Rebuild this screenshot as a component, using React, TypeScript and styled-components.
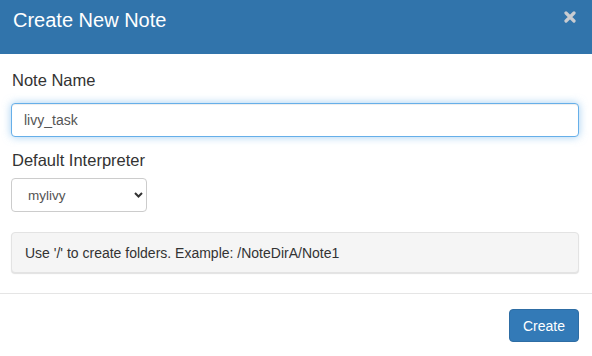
import React from "react";
import styled, { createGlobalStyle } from "styled-components";

const Global = createGlobalStyle`
  html, body { margin: 0; padding: 0; background: #fff; }
  body { font-family: "Liberation Sans", Arial, sans-serif; color: #333; }
  * { box-sizing: border-box; }
`;

const Modal = styled.div`
  width: 592px;
  height: 356px;
  display: flex;
  flex-direction: column;
  background: #fff;
`;

const Header = styled.div`
  height: 54px;
  background: #3174ab;
  display: flex;
  align-items: flex-start;
  justify-content: space-between;
  padding: 9px 16px 0 13px;
`;

const Title = styled.h4`
  margin: 0;
  font-size: 20px;
  line-height: 22px;
  font-weight: normal;
  color: #fff;
`;

const Close = styled.button`
  border: 0;
  background: transparent;
  padding: 0;
  margin-top: 2px;
  width: 12px;
  height: 12px;
  display: flex;
  cursor: pointer;
`;

const Body = styled.div`
  padding: 14px 13px 20px 11px;
  display: flex;
  flex-direction: column;
`;

const Label = styled.label<{ $gap: number }>`
  display: block;
  font-size: 16.5px;
  line-height: 24px;
  color: #333;
  padding-left: 1px;
  margin-bottom: ${(p) => p.$gap}px;
`;

const TextInput = styled.input`
  height: 34px;
  width: 100%;
  border: 1px solid #66afe9;
  border-radius: 4px;
  padding: 0 12px;
  font-family: "Liberation Sans", Arial, sans-serif;
  font-size: 14px;
  color: #555;
  outline: none;
  box-shadow: inset 0 1px 1px rgba(0, 0, 0, 0.075), 0 0 8px rgba(102, 175, 233, 0.6);
  margin-bottom: 11px;
`;

const SelectWrap = styled.div`
  position: relative;
  width: 136px;
  height: 34px;
  margin-bottom: 20px;
`;

const Select = styled.select`
  appearance: none;
  width: 100%;
  height: 100%;
  border: 1px solid #ccc;
  border-radius: 4px;
  padding: 0 0 0 16px;
  font-family: "Liberation Sans", Arial, sans-serif;
  font-size: 13.5px;
  color: #555;
  background: #fff;
  outline: none;
`;

const Chevron = styled.svg`
  position: absolute;
  right: 4px;
  top: 14px;
  pointer-events: none;
`;

const Well = styled.div`
  background: #f5f5f5;
  border: 1px solid #e3e3e3;
  border-radius: 4px;
  box-shadow: 0 1px 1px rgba(0, 0, 0, 0.12);
  padding: 10px 13px 9px;
  font-size: 14px;
  line-height: 20px;
  color: #333;
`;

const Footer = styled.div`
  border-top: 1px solid #e5e5e5;
  padding: 15px 13px 0 0;
  display: flex;
  justify-content: flex-end;
`;

const Button = styled.button`
  height: 33px;
  padding: 0 13px;
  background: #337ab7;
  border: 1px solid #2e6da4;
  border-radius: 4px;
  color: #fff;
  font-family: "Liberation Sans", Arial, sans-serif;
  font-size: 14px;
  cursor: pointer;
`;

export default function App() {
  return (
    <>
      <Global />
      <Modal>
        <Header>
          <Title>Create New Note</Title>
          <Close aria-label="Close">
            <svg width="12" height="12" viewBox="0 0 12 12">
              <path d="M2 2 L10 10 M10 2 L2 10" stroke="#c9ccd1" strokeWidth="3.2" strokeLinecap="round" />
            </svg>
          </Close>
        </Header>
        <Body>
          <Label $gap={11}>Note Name</Label>
          <TextInput defaultValue="livy_task" />
          <Label $gap={6}>Default Interpreter</Label>
          <SelectWrap>
            <Select defaultValue="mylivy">
              <option value="mylivy">mylivy</option>
            </Select>
            <Chevron width="9" height="6" viewBox="0 0 9 6">
              <path d="M1 1 L4.5 4.5 L8 1" fill="none" stroke="#333" strokeWidth="2" />
            </Chevron>
          </SelectWrap>
          <Well>Use '/' to create folders. Example: /NoteDirA/Note1</Well>
        </Body>
        <Footer>
          <Button>Create</Button>
        </Footer>
      </Modal>
    </>
  );
}
